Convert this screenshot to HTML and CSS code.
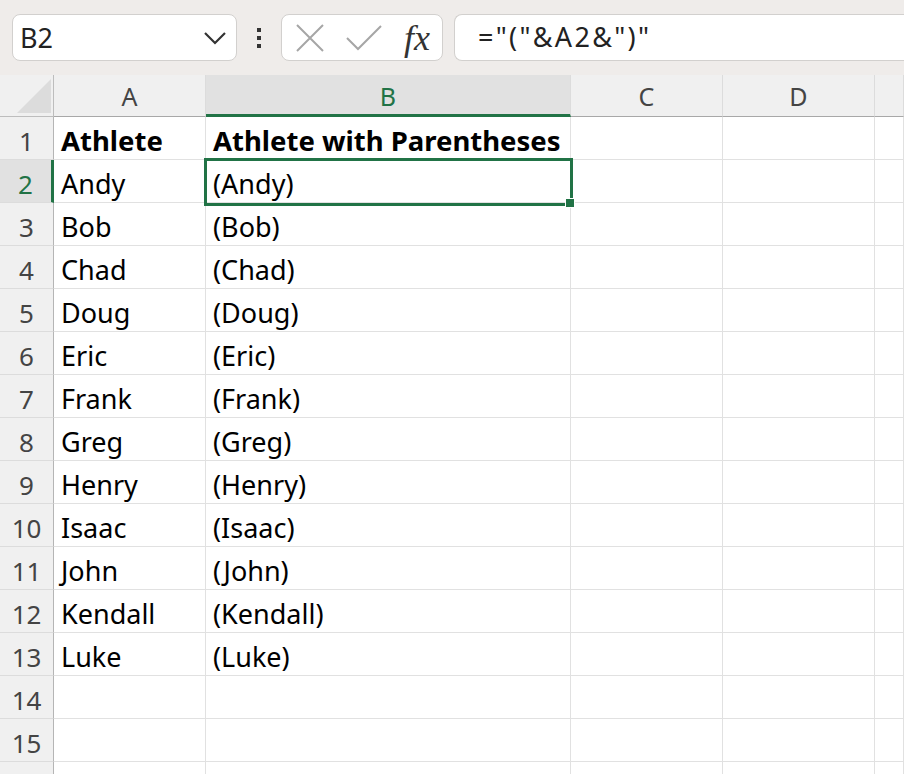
FILE: index.html
```html
<!DOCTYPE html>
<html lang="en">
<head>
  <meta charset="UTF-8">
  <title>Athlete with Parentheses</title>
  <link rel="stylesheet" href="styles.css">
</head>
<body>

<div class="barra">
  <div class="namebox">
    <span class="ref">B2</span>
    <svg class="chevron" width="24" height="14" viewBox="0 0 24 14"><path d="M2 2 L12 12 L22 2" fill="none" stroke="#333" stroke-width="2.2"/></svg>
  </div>
  <div class="puntos"><i></i><i></i><i></i></div>
  <div class="botones">
    <svg width="30" height="30" viewBox="0 0 30 30"><path d="M2 2 L28 28 M28 2 L2 28" stroke="#a6a6a6" stroke-width="2"/></svg>
    <svg width="38" height="28" viewBox="0 0 38 28"><path d="M2 14 L13 25 L36 2" fill="none" stroke="#a6a6a6" stroke-width="2"/></svg>
    <span class="fx">fx</span>
  </div>
  <div class="formula">="("&amp;A2&amp;")"</div>
</div>

<div class="hoja">
  <div class="esquina"><span class="triangulo"></span></div>
  <div class="col">A</div>
  <div class="col activa">B</div>
  <div class="col">C</div>
  <div class="col">D</div>
  <div class="col"></div>

  <div class="fila">1</div>
  <div class="celda negrita">Athlete</div>
  <div class="celda negrita">Athlete with Parentheses</div>
  <div class="celda"></div><div class="celda"></div><div class="celda"></div>

  <div class="fila activa">2</div>
  <div class="celda">Andy</div>
  <div class="celda">(Andy)</div>
  <div class="celda"></div><div class="celda"></div><div class="celda"></div>

  <div class="fila">3</div>
  <div class="celda">Bob</div>
  <div class="celda">(Bob)</div>
  <div class="celda"></div><div class="celda"></div><div class="celda"></div>

  <div class="fila">4</div>
  <div class="celda">Chad</div>
  <div class="celda">(Chad)</div>
  <div class="celda"></div><div class="celda"></div><div class="celda"></div>

  <div class="fila">5</div>
  <div class="celda">Doug</div>
  <div class="celda">(Doug)</div>
  <div class="celda"></div><div class="celda"></div><div class="celda"></div>

  <div class="fila">6</div>
  <div class="celda">Eric</div>
  <div class="celda">(Eric)</div>
  <div class="celda"></div><div class="celda"></div><div class="celda"></div>

  <div class="fila">7</div>
  <div class="celda">Frank</div>
  <div class="celda">(Frank)</div>
  <div class="celda"></div><div class="celda"></div><div class="celda"></div>

  <div class="fila">8</div>
  <div class="celda">Greg</div>
  <div class="celda">(Greg)</div>
  <div class="celda"></div><div class="celda"></div><div class="celda"></div>

  <div class="fila">9</div>
  <div class="celda">Henry</div>
  <div class="celda">(Henry)</div>
  <div class="celda"></div><div class="celda"></div><div class="celda"></div>

  <div class="fila">10</div>
  <div class="celda">Isaac</div>
  <div class="celda">(Isaac)</div>
  <div class="celda"></div><div class="celda"></div><div class="celda"></div>

  <div class="fila">11</div>
  <div class="celda">John</div>
  <div class="celda">(John)</div>
  <div class="celda"></div><div class="celda"></div><div class="celda"></div>

  <div class="fila">12</div>
  <div class="celda">Kendall</div>
  <div class="celda">(Kendall)</div>
  <div class="celda"></div><div class="celda"></div><div class="celda"></div>

  <div class="fila">13</div>
  <div class="celda">Luke</div>
  <div class="celda">(Luke)</div>
  <div class="celda"></div><div class="celda"></div><div class="celda"></div>

  <div class="fila">14</div>
  <div class="celda"></div><div class="celda"></div>
  <div class="celda"></div><div class="celda"></div><div class="celda"></div>

  <div class="fila">15</div>
  <div class="celda"></div><div class="celda"></div>
  <div class="celda"></div><div class="celda"></div><div class="celda"></div>

  <div class="fila"></div>
  <div class="celda"></div><div class="celda"></div>
  <div class="celda"></div><div class="celda"></div><div class="celda"></div>

  <div class="seleccion"><span class="tirador"></span></div>
</div>

</body>
</html>
```

FILE: styles.css
```css
body {
  margin: 0;
  font-family: "Noto Sans", "Open Sans", sans-serif;
  background: #fff;
  overflow: hidden;
  width: 904px;
  height: 774px;
}

/* barra de formulas */
.barra {
  display: flex;
  align-items: center;
  height: 75px;
  padding-left: 12px;
  background: #efecea;
  box-sizing: border-box;
}
.namebox {
  display: flex;
  align-items: center;
  justify-content: space-between;
  width: 225px;
  height: 47px;
  box-sizing: border-box;
  background: #fff;
  border: 1px solid #d2d0ce;
  border-radius: 8px;
  padding: 0 9px 0 7px;
}
.ref {
  font-size: 27px;
  color: #222;
}
.puntos {
  display: flex;
  flex-direction: column;
  gap: 4px;
  margin: 0 20px 0 20px;
}
.puntos i {
  display: block;
  width: 4px;
  height: 4px;
  background: #333;
}
.botones {
  display: flex;
  align-items: center;
  width: 162px;
  height: 47px;
  box-sizing: border-box;
  background: #fff;
  border: 1px solid #d2d0ce;
  border-radius: 8px;
  padding: 0 10px 0 13px;
  gap: 20px;
}
.fx {
  font-family: "Liberation Serif", serif;
  font-style: italic;
  font-size: 36px;
  line-height: 40px;
  color: #333;
  margin-left: 1px;
}
.formula {
  margin-left: 11px;
  flex: 1;
  height: 47px;
  box-sizing: border-box;
  background: #fff;
  border: 1px solid #d2d0ce;
  border-right: none;
  border-radius: 8px 0 0 8px;
  padding-left: 23px;
  font-size: 27px;
  letter-spacing: 2.3px;
  line-height: 44px;
  color: #222;
}

/* hoja */
.hoja {
  position: relative;
  display: grid;
  grid-template-columns: 54px 152px 365px 152px 152px 29px;
  grid-template-rows: 42px repeat(16, 43px);
  font-size: 27px;
}
.esquina {
  position: relative;
  background: #f0f0f0;
  border-right: 1px solid #bdbdbd;
  border-bottom: 1px solid #bdbdbd;
}
.triangulo {
  position: absolute;
  left: 17px;
  top: 4px;
  width: 0;
  height: 0;
  border-left: 34px solid transparent;
  border-bottom: 34px solid #dcdcdc;
}
.col {
  background: #f0f0f0;
  border-right: 1px solid #dcdcdc;
  border-bottom: 1px solid #a8a8a8;
  color: #444;
  font-size: 25px;
  text-align: center;
  line-height: 42px;
}
.col.activa {
  background: #e1e1e1;
  color: #217346;
  border-bottom: 3px solid #217346;
}
.fila {
  background: #f0f0f0;
  border-right: 1px solid #b5b5b5;
  border-bottom: 1px solid #dcdcdc;
  color: #444;
  font-size: 26px;
  text-align: center;
  line-height: 42px;
  padding-top: 3px;
  box-sizing: border-box;
  overflow: hidden;
}
.fila.activa {
  background: #e1e1e1;
  color: #217346;
  border-right: 3px solid #217346;
}
.celda {
  border-right: 1px solid #e1e1e1;
  border-bottom: 1px solid #e1e1e1;
  padding: 3px 0 0 7px;
  box-sizing: border-box;
  line-height: 42px;
  height: 43px;
  color: #000;
  white-space: nowrap;
}
.negrita {
  font-weight: bold;
  font-size: 27.5px;
}
.seleccion {
  position: absolute;
  left: 204px;
  top: 83px;
  width: 369px;
  height: 48px;
  box-sizing: border-box;
  border: 3px solid #217346;
}
.tirador {
  position: absolute;
  right: -5px;
  bottom: -5px;
  width: 8px;
  height: 8px;
  background: #217346;
  border: 1px solid #fff;
}
```
